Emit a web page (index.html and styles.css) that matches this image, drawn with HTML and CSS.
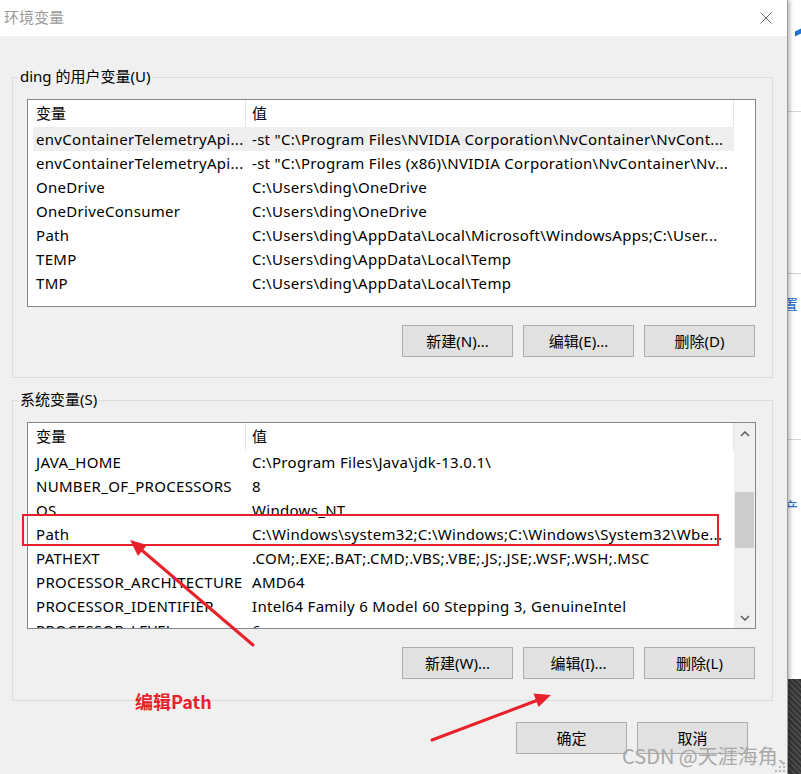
FILE: index.html
```html
<!DOCTYPE html>
<html lang="zh-CN">
<head>
<meta charset="utf-8">
<title>环境变量</title>
<link rel="stylesheet" href="styles.css">
</head>
<body>
<div class="dialog">
  <div class="titlebar">
    <span class="title">环境变量</span>
    <svg class="close" width="12" height="12" viewBox="0 0 12 12"><path d="M0.5 0.5 L11.5 11.5 M11.5 0.5 L0.5 11.5" stroke="#6f6f6f" stroke-width="1" fill="none"/></svg>
  </div>
  <div class="content">
    <div class="group">
      <span class="group-label">ding 的用户变量(U)</span>
      <div class="list list-user">
        <div class="cols">
          <div class="head"><div class="hc hc1">变量</div><div class="hc hc2">值</div></div>
          <div class="row sel"><div class="c1">envContainerTelemetryApi...</div><div class="c2">-st "C:\Program Files\NVIDIA Corporation\NvContainer\NvCont...</div></div>
          <div class="row"><div class="c1">envContainerTelemetryApi...</div><div class="c2">-st "C:\Program Files (x86)\NVIDIA Corporation\NvContainer\Nv...</div></div>
          <div class="row"><div class="c1">OneDrive</div><div class="c2">C:\Users\ding\OneDrive</div></div>
          <div class="row"><div class="c1">OneDriveConsumer</div><div class="c2">C:\Users\ding\OneDrive</div></div>
          <div class="row"><div class="c1">Path</div><div class="c2">C:\Users\ding\AppData\Local\Microsoft\WindowsApps;C:\User...</div></div>
          <div class="row"><div class="c1">TEMP</div><div class="c2">C:\Users\ding\AppData\Local\Temp</div></div>
          <div class="row"><div class="c1">TMP</div><div class="c2">C:\Users\ding\AppData\Local\Temp</div></div>
        </div>
        <div class="blank"></div>
      </div>
      <div class="buttons">
        <button class="btn">新建(N)...</button>
        <button class="btn">编辑(E)...</button>
        <button class="btn">删除(D)</button>
      </div>
    </div>

    <div class="group group-sys">
      <span class="group-label">系统变量(S)</span>
      <div class="list list-sys">
        <div class="cols">
          <div class="head"><div class="hc hc1">变量</div><div class="hc hc2">值</div></div>
          <div class="row"><div class="c1">JAVA_HOME</div><div class="c2">C:\Program Files\Java\jdk-13.0.1\</div></div>
          <div class="row"><div class="c1">NUMBER_OF_PROCESSORS</div><div class="c2">8</div></div>
          <div class="row"><div class="c1">OS</div><div class="c2">Windows_NT</div></div>
          <div class="row"><div class="c1">Path</div><div class="c2">C:\Windows\system32;C:\Windows;C:\Windows\System32\Wbe...</div></div>
          <div class="row"><div class="c1">PATHEXT</div><div class="c2">.COM;.EXE;.BAT;.CMD;.VBS;.VBE;.JS;.JSE;.WSF;.WSH;.MSC</div></div>
          <div class="row"><div class="c1">PROCESSOR_ARCHITECTURE</div><div class="c2">AMD64</div></div>
          <div class="row"><div class="c1">PROCESSOR_IDENTIFIER</div><div class="c2">Intel64 Family 6 Model 60 Stepping 3, GenuineIntel</div></div>
          <div class="row"><div class="c1">PROCESSOR_LEVEL</div><div class="c2">6</div></div>
        </div>
        <div class="vscroll">
          <div class="sb-btn"><svg width="10" height="6" viewBox="0 0 10 6"><path d="M1 5 L5 1 L9 5" stroke="#606060" stroke-width="1.6" fill="none"/></svg></div>
          <div class="sb-track"><div class="sb-thumb"></div></div>
          <div class="sb-btn"><svg width="10" height="6" viewBox="0 0 10 6"><path d="M1 1 L5 5 L9 1" stroke="#606060" stroke-width="1.6" fill="none"/></svg></div>
        </div>
      </div>
      <div class="buttons">
        <button class="btn">新建(W)...</button>
        <button class="btn">编辑(I)...</button>
        <button class="btn">删除(L)</button>
      </div>
    </div>

    <div class="footer">
      <button class="btn">确定</button>
      <button class="btn">取消</button>
    </div>
  </div>

  <div class="mark-rect"></div>
  <div class="mark-text">编辑Path</div>
  <svg class="arrows" width="801" height="774" viewBox="0 0 801 774">
    <line x1="253" y1="645" x2="141" y2="549.5" stroke="#e8222a" stroke-width="3" stroke-linecap="round"/>
    <polygon points="130,540 147,545 138,556" fill="#e8222a"/>
    <line x1="432" y1="740" x2="538" y2="700" stroke="#e8222a" stroke-width="3" stroke-linecap="round"/>
    <polygon points="551,695 538.5,707 533.5,693.5" fill="#e8222a"/>
  </svg>
  <div class="watermark">CSDN @天涯海角、</div>
  <svg class="grip" width="14" height="13" viewBox="0 0 14 13">
    <rect x="10" y="1" width="2" height="2" fill="#b8b8b8"/>
    <rect x="6" y="5" width="2" height="2" fill="#b8b8b8"/>
    <rect x="10" y="5" width="2" height="2" fill="#b8b8b8"/>
    <rect x="2" y="9" width="2" height="2" fill="#b8b8b8"/>
    <rect x="6" y="9" width="2" height="2" fill="#b8b8b8"/>
    <rect x="10" y="9" width="2" height="2" fill="#b8b8b8"/>
  </svg>
</div>
<div class="side">
  <div class="seg seg-a"><span class="blue-mark"></span></div>
  <div class="seg seg-b"></div>
  <div class="seg seg-c"><span class="glyph">置</span></div>
  <div class="seg seg-d"><span class="glyph glyph-d">产</span></div>
  <div class="seg seg-e"></div>
</div>
</body>
</html>
```

FILE: styles.css
```css
* { box-sizing: border-box; }

html, body {
  margin: 0;
  padding: 0;
}

body {
  width: 801px;
  height: 774px;
  overflow: hidden;
  display: flex;
  background: #ffffff;
  font-family: "Noto Sans", "Noto Sans CJK SC", sans-serif;
  font-size: 15px;
  color: #000;
}

.dialog {
  width: 788px;
  height: 774px;
  flex: none;
  background: #f0f0f0;
  border-right: 1px solid #9c9c9c;
  position: relative;
  z-index: 1;
  box-shadow: 2px 0 4px rgba(0, 0, 0, 0.28);
}

.titlebar {
  height: 36px;
  background: #ffffff;
  display: flex;
  align-items: center;
  justify-content: space-between;
  padding: 0 15px 0 4px;
}

.title {
  color: #9b9b9b;
  font-size: 15px;
  line-height: 20px;
  margin-top: -2px;
}

.close { display: block; margin-top: -1px; }

.content {
  padding-top: 41px;
}

.group {
  width: 761px;
  margin-left: 12px;
  border: 1px solid #dcdcdc;
  padding: 0 17px 20px 14px;
}

.group-sys {
  margin-top: 22px;
  padding-bottom: 21px;
}

.group-label {
  display: block;
  width: max-content;
  margin: -12px 0 0 -9px;
  padding: 0 2px;
  line-height: 20px;
  background: #f0f0f0;
}

.list {
  width: 729px;
  margin-top: 13px;
  background: #ffffff;
  border: 1px solid #828790;
  display: flex;
  overflow: hidden;
}

.list-user { height: 208px; }
.list-sys { height: 207px; }

.cols {
  width: 706px;
  flex: none;
  display: flex;
  flex-direction: column;
  overflow: hidden;
}

.blank { flex: 1; }

.head {
  display: grid;
  grid-template-columns: 218px 488px;
  height: 27px;
  flex: none;
}

.hc {
  border-right: 1px solid #e5e5e5;
  line-height: 27px;
  height: 27px;
  white-space: nowrap;
  overflow: hidden;
}

.hc1 { padding-left: 8px; }
.hc2 { padding-left: 6px; }

.row {
  display: grid;
  grid-template-columns: 213px 487px;
  margin-left: 5px;
  height: 24px;
  flex: none;
  line-height: 23px;
  padding-top: 1px;
}

.row.sel { background: #efefef; }

.c1, .c2 {
  white-space: nowrap;
  overflow: hidden;
  letter-spacing: 0.3px;
}

.c1 { padding-left: 3px; }
.c2 { padding-left: 6px; }

.vscroll {
  width: 21px;
  flex: none;
  background: #f0f0f0;
  display: flex;
  flex-direction: column;
}

.sb-btn {
  height: 21px;
  flex: none;
  display: flex;
  align-items: center;
  justify-content: center;
}

.sb-track { flex: 1; }

.sb-thumb {
  height: 56px;
  margin: 48px 1px 0 1px;
  background: #cdcdcd;
}

.buttons {
  display: flex;
  justify-content: flex-end;
  gap: 10px;
  margin-top: 18px;
}

.btn {
  width: 111px;
  height: 32px;
  background: #e1e1e1;
  border: 1px solid #adadad;
  border-radius: 0;
  font-family: "Noto Sans", "Noto Sans CJK SC", sans-serif;
  font-size: 15px;
  color: #000;
  padding: 0;
  line-height: 30px;
}

.footer {
  display: flex;
  justify-content: flex-end;
  gap: 10px;
  margin-top: 21px;
  padding-right: 39px;
}

.mark-rect {
  position: absolute;
  left: 22px;
  top: 514px;
  width: 697px;
  height: 32px;
  border: 2px solid #e4212a;
}

.mark-text {
  position: absolute;
  left: 135px;
  top: 690px;
  font-family: "Noto Sans CJK SC", sans-serif;
  font-weight: 700;
  font-size: 18px;
  line-height: 22px;
  color: #e8222a;
}

.arrows {
  position: absolute;
  left: 0;
  top: 0;
  pointer-events: none;
}

.watermark {
  position: absolute;
  left: 622px;
  top: 743px;
  font-family: "Noto Sans CJK SC", sans-serif;
  font-size: 20px;
  line-height: 26px;
  color: #a8a8a8;
  white-space: nowrap;
}

.grip {
  position: absolute;
  right: 0;
  bottom: 0;
}

.side {
  flex: 1;
  display: flex;
  flex-direction: column;
  overflow: hidden;
}

.seg { flex: none; overflow: hidden; }
.seg-a { height: 112px; border-bottom: 1px solid #d4d4d4; }
.seg-b { height: 162px; border-bottom: 1px solid #d4d4d4; }
.seg-c { height: 166px; border-bottom: 1px solid #d4d4d4; }
.seg-d { height: 239px; }
.seg-e {
  flex: 1;
  background: #3e3e3e;
  background-image: repeating-linear-gradient(45deg, #4a4a4a 0 2px, #333 2px 4px);
}

.blue-mark {
  display: block;
  width: 6px;
  height: 5px;
  margin: 30px 0 0 7px;
  background: #1e72d2;
  transform: skewY(-25deg);
}

.glyph {
  display: block;
  margin: 21px 0 0 -5px;
  font-family: "Noto Sans CJK SC", sans-serif;
  font-size: 15px;
  line-height: 17px;
  color: #2b6fcf;
}

.glyph-d { margin-top: 58px; }
```
